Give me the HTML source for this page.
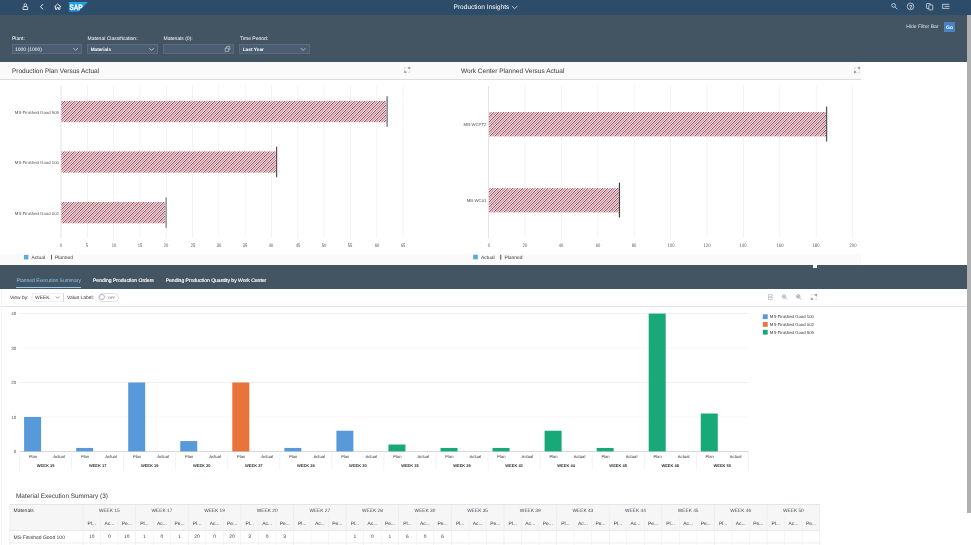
<!DOCTYPE html>
<html lang="en">
<head>
<meta charset="utf-8">
<title>Production Insights</title>
<style>
html,body{margin:0;padding:0;}
body{width:971px;height:545px;overflow:hidden;background:#fff;position:relative;font-family:"Liberation Sans",sans-serif;}
.t{position:absolute;line-height:10px;height:10px;white-space:nowrap;font-family:"Liberation Sans",sans-serif;}
.abs{position:absolute;}
.inp{position:absolute;top:44.3px;height:9.7px;box-sizing:border-box;background:#4a5d71;border:0.5px solid #586c7f;}
svg{position:absolute;left:0;top:0;overflow:visible;}
</style>
</head>
<body>
<div id="app" style="position:absolute;left:0;top:0;width:971px;height:545px;overflow:hidden;background:#fff;will-change:transform;text-rendering:geometricPrecision;">

<div class="abs" style="left:0;top:0;width:971px;height:15px;background:#2c4c69;"></div>
<div class="abs" style="left:0;top:15px;width:966.5px;height:46.5px;background:#435462;"></div>
<div class="abs" style="left:966.5px;top:15px;width:4.5px;height:498.4px;background:#b0b0b0;"></div>
<svg width="971" height="15" viewBox="0 0 971 15">
<g fill="none" stroke="#fff" stroke-width="0.8"><rect x="24.2" y="3.7" width="2.3" height="2.6" rx="0.9" stroke-width="0.7"/><path d="M23 9.5v-2.1q0-0.8 0.8-0.8h3.1q0.8 0 0.8 0.8v2.1z" stroke-width="0.75"/></g>
<path d="M43.1 4.1l-2.6 2.65 2.6 2.65" fill="none" stroke="#fff" stroke-width="0.9"/>
<g fill="none" stroke="#fff" stroke-width="0.8"><path d="M54.4 6.8l3.3-2.8 3.3 2.8"/><path d="M55.5 6.3v3.1h1.4v-1.8h1.6v1.8h1.4v-3.1"/></g>
<defs><linearGradient id="sg" x1="0" y1="0" x2="0" y2="1"><stop offset="0" stop-color="#22a6ee"/><stop offset="1" stop-color="#1a7dc6"/></linearGradient></defs><path d="M68.9 2h19l-9.8 10H68.9z" fill="url(#sg)"/>
<text x="69.4" y="10" font-family="Liberation Sans, sans-serif" font-weight="700" font-size="8" fill="#fff" stroke="#fff" stroke-width="0.25" textLength="13.2" lengthAdjust="spacingAndGlyphs">SAP</text>
<path d="M511.9 6.1l2.7 2.6 2.7-2.6" fill="none" stroke="#fff" stroke-width="0.7"/>
<g fill="none" stroke="#dde4ea" stroke-width="0.75"><circle cx="893.6" cy="5.4" r="1.9"/><path d="M895 6.9l2.4 2.4"/></g>
<g fill="none" stroke="#dde4ea" stroke-width="0.75"><circle cx="910.5" cy="6.4" r="3.3"/></g>
<text x="908.9" y="8.6" font-family="Liberation Sans, sans-serif" font-size="5.8" font-weight="700" fill="#e4eaef">?</text>
<g fill="none" stroke="#dde4ea" stroke-width="0.75"><rect x="926.5" y="3.5" width="3.8" height="5" rx="0.6"/><rect x="928.8" y="4.9" width="4" height="5" rx="0.6" fill="#2c4c69"/></g>
<g fill="none" stroke="#dde4ea" stroke-width="0.75"><path d="M942.4 4.3h7M942.4 8.4h7M942.6 4.3v4.1M944.6 6.4h4.8"/></g>
</svg>
<div class="t" style="left:385.00px;width:200px;text-align:center;top:3.1px;font-size:6.55px;color:#fff;font-weight:400;margin-left:-3.6px;">Production Insights</div>
<div class="t" style="left:12px;top:34.1px;font-size:5.0px;color:#fff;font-weight:400;">Plant:</div>
<div class="t" style="left:87.5px;top:34.1px;font-size:5.0px;color:#fff;font-weight:400;">Material Classification:</div>
<div class="t" style="left:163.5px;top:34.1px;font-size:5.0px;color:#fff;font-weight:400;">Materials (0):</div>
<div class="t" style="left:240px;top:34.1px;font-size:5.0px;color:#fff;font-weight:400;">Time Period:</div>
<div class="inp" style="left:11.5px;width:70.5px;"></div>
<div class="inp" style="left:87px;width:71px;"></div>
<div class="inp" style="left:163px;width:71px;"></div>
<div class="inp" style="left:239.3px;width:70.69999999999999px;"></div>
<div class="t" style="left:15px;top:45.1px;font-size:5.0px;color:#fff;font-weight:400;">1000 (1000)</div>
<div class="t" style="left:90.7px;top:45.1px;font-size:4.7px;color:#fff;font-weight:700;">Materials</div>
<div class="t" style="left:242.7px;top:46.1px;font-size:4.8px;color:#fff;font-weight:700;">Last Year</div>
<svg width="971" height="60" viewBox="0 0 971 60"><g fill="none" stroke="#e6ecf1" stroke-width="0.65">
<path d="M73.4 48.1l2.3 2.3 2.3-2.3"/>
<path d="M149.2 48.1l2.3 2.3 2.3-2.3"/>
<path d="M300.9 48.1l2.3 2.3 2.3-2.3"/>
<g stroke="#c9d3dc" stroke-width="0.6"><rect x="225.1" y="48.1" width="3.2" height="3.3"/><path d="M226.6 48.1v-1.7h3.2v3.3h-1.5"/></g>
</g></svg>
<div class="t" style="right:32.5px;top:22.1px;font-size:5.05px;color:#dde3e8;font-weight:400;">Hide Filter Bar</div>
<div class="abs" style="left:943.8px;top:22px;width:11.6px;height:9.8px;background:#4684c6;border-radius:0.6px;"></div>
<div class="t" style="left:849.60px;width:200px;text-align:center;top:23.1px;font-size:5.0px;color:#fff;font-weight:700;">Go</div>
<div class="abs" style="left:0;top:61.5px;width:861px;height:17.5px;background:#fafafa;"></div>
<div class="abs" style="left:0;top:79px;width:861px;height:0.7px;background:#dcdcdc;"></div>
<div class="t" style="left:12px;top:67.1px;font-size:6.5px;color:#32363a;font-weight:400;">Production Plan Versus Actual</div>
<div class="t" style="left:461px;top:67.1px;font-size:6.5px;color:#32363a;font-weight:400;">Work Center Planned Versus Actual</div>
<div class="abs" style="left:0;top:253.5px;width:861px;height:11.5px;background:#fbfafa;"></div>
<svg width="971" height="270" viewBox="0 0 971 270">
<defs><pattern id="h" width="5" height="5" patternUnits="userSpaceOnUse"><g shape-rendering="crispEdges"><rect x="0" y="0" width="1" height="1" fill="#955260"/><rect x="1" y="0" width="1" height="1" fill="#fabec5"/><rect x="2" y="0" width="1" height="1" fill="#d2b2b8"/><rect x="3" y="0" width="1" height="1" fill="#e4929d"/><rect x="4" y="0" width="1" height="1" fill="#fff4f5"/><rect x="0" y="1" width="1" height="1" fill="#fabec5"/><rect x="1" y="1" width="1" height="1" fill="#d2b2b8"/><rect x="2" y="1" width="1" height="1" fill="#e4929d"/><rect x="3" y="1" width="1" height="1" fill="#fff4f5"/><rect x="4" y="1" width="1" height="1" fill="#955260"/><rect x="0" y="2" width="1" height="1" fill="#d2b2b8"/><rect x="1" y="2" width="1" height="1" fill="#e4929d"/><rect x="2" y="2" width="1" height="1" fill="#fff4f5"/><rect x="3" y="2" width="1" height="1" fill="#955260"/><rect x="4" y="2" width="1" height="1" fill="#fabec5"/><rect x="0" y="3" width="1" height="1" fill="#e4929d"/><rect x="1" y="3" width="1" height="1" fill="#fff4f5"/><rect x="2" y="3" width="1" height="1" fill="#955260"/><rect x="3" y="3" width="1" height="1" fill="#fabec5"/><rect x="4" y="3" width="1" height="1" fill="#d2b2b8"/><rect x="0" y="4" width="1" height="1" fill="#fff4f5"/><rect x="1" y="4" width="1" height="1" fill="#955260"/><rect x="2" y="4" width="1" height="1" fill="#fabec5"/><rect x="3" y="4" width="1" height="1" fill="#d2b2b8"/><rect x="4" y="4" width="1" height="1" fill="#e4929d"/></g></pattern></defs>
<g fill="none" stroke="#5f6c79" stroke-width="0.6"><path d="M407.80 67.4h2v2M409.80 67.4l-1.7 1.7M406.60 72.60h-2v-2M404.6 72.60l1.7-1.7"/><path d="M404.6 69.20v-1.8h1.8M409.80 70.80v1.8h-1.8" stroke="#a9b2bb" stroke-dasharray="0.7 0.5"/></g>
<g fill="none" stroke="#5f6c79" stroke-width="0.6"><path d="M857.60 67.4h2v2M859.60 67.4l-1.7 1.7M856.40 72.60h-2v-2M854.4 72.60l1.7-1.7"/><path d="M854.4 69.20v-1.8h1.8M859.60 70.80v1.8h-1.8" stroke="#a9b2bb" stroke-dasharray="0.7 0.5"/></g>
<rect x="60.65" y="86" width="0.7" height="152.0" fill="#d9d9d9"/>
<rect x="86.96" y="86" width="0.7" height="152.0" fill="#efefef"/>
<rect x="113.27" y="86" width="0.7" height="152.0" fill="#efefef"/>
<rect x="139.58" y="86" width="0.7" height="152.0" fill="#efefef"/>
<rect x="165.89" y="86" width="0.7" height="152.0" fill="#efefef"/>
<rect x="192.20" y="86" width="0.7" height="152.0" fill="#efefef"/>
<rect x="218.51" y="86" width="0.7" height="152.0" fill="#efefef"/>
<rect x="244.82" y="86" width="0.7" height="152.0" fill="#efefef"/>
<rect x="271.13" y="86" width="0.7" height="152.0" fill="#efefef"/>
<rect x="297.44" y="86" width="0.7" height="152.0" fill="#efefef"/>
<rect x="323.75" y="86" width="0.7" height="152.0" fill="#efefef"/>
<rect x="350.06" y="86" width="0.7" height="152.0" fill="#efefef"/>
<rect x="376.37" y="86" width="0.7" height="152.0" fill="#efefef"/>
<rect x="402.68" y="86" width="0.7" height="152.0" fill="#efefef"/>
<rect x="61.3" y="100.9" width="325.04" height="21.3" fill="url(#h)"/>
<rect x="386.29" y="96.20" width="1.7" height="30.5" fill="#8d9391"/>
<rect x="61.3" y="151.4" width="214.54" height="21.3" fill="url(#h)"/>
<rect x="276.09" y="146.70" width="1.1" height="30.5" fill="#46464c"/>
<rect x="61.3" y="202.0" width="104.04" height="21.3" fill="url(#h)"/>
<rect x="165.34" y="197.30" width="1.6" height="30.5" fill="#979a9a"/>
<rect x="488.25" y="86" width="0.7" height="152" fill="#d9d9d9"/>
<rect x="524.65" y="86" width="0.7" height="152" fill="#efefef"/>
<rect x="561.05" y="86" width="0.7" height="152" fill="#efefef"/>
<rect x="597.45" y="86" width="0.7" height="152" fill="#efefef"/>
<rect x="633.85" y="86" width="0.7" height="152" fill="#efefef"/>
<rect x="670.25" y="86" width="0.7" height="152" fill="#efefef"/>
<rect x="706.65" y="86" width="0.7" height="152" fill="#efefef"/>
<rect x="743.05" y="86" width="0.7" height="152" fill="#efefef"/>
<rect x="779.45" y="86" width="0.7" height="152" fill="#efefef"/>
<rect x="815.85" y="86" width="0.7" height="152" fill="#efefef"/>
<rect x="852.25" y="86" width="0.7" height="152" fill="#efefef"/>
<rect x="488.90000000000003" y="112.1" width="337.07" height="24.3" fill="url(#h)"/>
<rect x="825.92" y="106.60" width="1.3" height="34.9" fill="#58585e"/>
<rect x="488.90000000000003" y="188.1" width="129.96" height="24.3" fill="url(#h)"/>
<rect x="618.86" y="182.60" width="1.2" height="34.9" fill="#3e3e44"/>
<rect x="23.9" y="254.9" width="4.5" height="4.5" fill="#5caed4"/><rect x="51" y="254.9" width="0.8" height="4.7" fill="#33373b"/>
<rect x="473.1" y="254.7" width="4.7" height="4.6" fill="#5caed4"/><rect x="500" y="254.8" width="1.3" height="4.8" fill="#6e7276"/>
</svg>
<div class="t" style="right:912px;top:108.1px;font-size:4.3px;color:#505458;font-weight:400;">MS-Finished Good 909</div>
<div class="t" style="right:912px;top:158.1px;font-size:4.3px;color:#505458;font-weight:400;">MS-Finished Good 100</div>
<div class="t" style="right:912px;top:209.1px;font-size:4.3px;color:#505458;font-weight:400;">MS-Finished Good 002</div>
<div class="t" style="right:484.5px;top:120.1px;font-size:4.3px;color:#505458;font-weight:400;">MB-WCPT2</div>
<div class="t" style="right:484.5px;top:196.1px;font-size:4.3px;color:#505458;font-weight:400;">MB-WC01</div>
<div class="t" style="left:-39.00px;width:200px;text-align:center;top:241.1px;font-size:5.0px;color:#505458;font-weight:400;transform:scaleX(0.82);">0</div>
<div class="t" style="left:-12.69px;width:200px;text-align:center;top:241.1px;font-size:5.0px;color:#505458;font-weight:400;transform:scaleX(0.82);">5</div>
<div class="t" style="left:13.62px;width:200px;text-align:center;top:241.1px;font-size:5.0px;color:#505458;font-weight:400;transform:scaleX(0.82);">10</div>
<div class="t" style="left:39.93px;width:200px;text-align:center;top:241.1px;font-size:5.0px;color:#505458;font-weight:400;transform:scaleX(0.82);">15</div>
<div class="t" style="left:66.24px;width:200px;text-align:center;top:241.1px;font-size:5.0px;color:#505458;font-weight:400;transform:scaleX(0.82);">20</div>
<div class="t" style="left:92.55px;width:200px;text-align:center;top:241.1px;font-size:5.0px;color:#505458;font-weight:400;transform:scaleX(0.82);">25</div>
<div class="t" style="left:118.86px;width:200px;text-align:center;top:241.1px;font-size:5.0px;color:#505458;font-weight:400;transform:scaleX(0.82);">30</div>
<div class="t" style="left:145.17px;width:200px;text-align:center;top:241.1px;font-size:5.0px;color:#505458;font-weight:400;transform:scaleX(0.82);">35</div>
<div class="t" style="left:171.48px;width:200px;text-align:center;top:241.1px;font-size:5.0px;color:#505458;font-weight:400;transform:scaleX(0.82);">40</div>
<div class="t" style="left:197.79px;width:200px;text-align:center;top:241.1px;font-size:5.0px;color:#505458;font-weight:400;transform:scaleX(0.82);">45</div>
<div class="t" style="left:224.10px;width:200px;text-align:center;top:241.1px;font-size:5.0px;color:#505458;font-weight:400;transform:scaleX(0.82);">50</div>
<div class="t" style="left:250.41px;width:200px;text-align:center;top:241.1px;font-size:5.0px;color:#505458;font-weight:400;transform:scaleX(0.82);">55</div>
<div class="t" style="left:276.72px;width:200px;text-align:center;top:241.1px;font-size:5.0px;color:#505458;font-weight:400;transform:scaleX(0.82);">60</div>
<div class="t" style="left:303.03px;width:200px;text-align:center;top:241.1px;font-size:5.0px;color:#505458;font-weight:400;transform:scaleX(0.82);">65</div>
<div class="t" style="left:388.60px;width:200px;text-align:center;top:241.1px;font-size:5.0px;color:#505458;font-weight:400;transform:scaleX(0.82);">0</div>
<div class="t" style="left:425.00px;width:200px;text-align:center;top:241.1px;font-size:5.0px;color:#505458;font-weight:400;transform:scaleX(0.82);">20</div>
<div class="t" style="left:461.40px;width:200px;text-align:center;top:241.1px;font-size:5.0px;color:#505458;font-weight:400;transform:scaleX(0.82);">40</div>
<div class="t" style="left:497.80px;width:200px;text-align:center;top:241.1px;font-size:5.0px;color:#505458;font-weight:400;transform:scaleX(0.82);">60</div>
<div class="t" style="left:534.20px;width:200px;text-align:center;top:241.1px;font-size:5.0px;color:#505458;font-weight:400;transform:scaleX(0.82);">80</div>
<div class="t" style="left:570.60px;width:200px;text-align:center;top:241.1px;font-size:5.0px;color:#505458;font-weight:400;transform:scaleX(0.82);">100</div>
<div class="t" style="left:607.00px;width:200px;text-align:center;top:241.1px;font-size:5.0px;color:#505458;font-weight:400;transform:scaleX(0.82);">120</div>
<div class="t" style="left:643.40px;width:200px;text-align:center;top:241.1px;font-size:5.0px;color:#505458;font-weight:400;transform:scaleX(0.82);">140</div>
<div class="t" style="left:679.80px;width:200px;text-align:center;top:241.1px;font-size:5.0px;color:#505458;font-weight:400;transform:scaleX(0.82);">160</div>
<div class="t" style="left:716.20px;width:200px;text-align:center;top:241.1px;font-size:5.0px;color:#505458;font-weight:400;transform:scaleX(0.82);">180</div>
<div class="t" style="left:752.60px;width:200px;text-align:center;top:241.1px;font-size:5.0px;color:#505458;font-weight:400;transform:scaleX(0.82);">200</div>
<div class="t" style="left:31.5px;top:254.1px;font-size:4.9px;color:#32363a;font-weight:400;">Actual</div>
<div class="t" style="left:55px;top:254.1px;font-size:4.9px;color:#32363a;font-weight:400;">Planned</div>
<div class="t" style="left:481px;top:254.1px;font-size:4.9px;color:#32363a;font-weight:400;">Actual</div>
<div class="t" style="left:504.5px;top:254.1px;font-size:4.9px;color:#32363a;font-weight:400;">Planned</div>
<div class="abs" style="left:0;top:265px;width:966.5px;height:23.6px;background:#435462;"></div>
<div class="abs" style="left:813px;top:264.6px;width:4px;height:3.3px;background:#fff;"></div>
<div class="t" style="left:16.5px;top:276.1px;font-size:5.0px;color:#8fc7f5;font-weight:400;">Planned Execution Summary</div>
<div class="abs" style="left:16px;top:286.7px;width:65px;height:1px;background:#8fc7f5;"></div>
<div class="t" style="left:93px;top:276.1px;font-size:5.05px;color:#fff;font-weight:400;-webkit-text-stroke:0.15px #fff;">Pending Production Orders</div>
<div class="t" style="left:165.7px;top:276.1px;font-size:5.05px;color:#fff;font-weight:400;-webkit-text-stroke:0.15px #fff;">Pending Production Quantity by Work Center</div>
<div class="t" style="left:10px;top:294.1px;font-size:4.92px;color:#32363a;font-weight:400;">View by:</div>
<div class="abs" style="left:31.5px;top:292.6px;width:32px;height:9.2px;box-sizing:border-box;border:0.6px solid #eeeff0;border-right-color:#d3d6d9;background:#fff;"></div>
<div class="t" style="left:35px;top:294.1px;font-size:4.92px;color:#32363a;font-weight:400;">WEEK</div>
<div class="t" style="left:67px;top:294.1px;font-size:4.92px;color:#32363a;font-weight:400;">Value Label:</div>
<div class="abs" style="left:97.5px;top:292.6px;width:21.5px;height:9.2px;box-sizing:border-box;border:0.6px solid #dcdfe2;border-radius:4.6px;background:#fff;"></div>
<div class="abs" style="left:99px;top:294.1px;width:6.2px;height:6.2px;box-sizing:border-box;border:0.6px solid #b0b6bc;border-radius:50%;background:#fff;"></div>
<div class="t" style="left:108.3px;top:293.1px;font-size:3.6px;color:#5a6066;font-weight:400;">OFF</div>
<div class="abs" style="left:0;top:306.2px;width:966.5px;height:0.7px;background:#e4e4e4;"></div>
<div class="abs" style="left:1px;top:289px;width:0.6px;height:256px;background:#f6f6f6;"></div>
<svg width="971" height="545" viewBox="0 0 971 545">
<path d="M55.6 296.4l1.9 1.9 1.9-1.9" fill="none" stroke="#5b6a78" stroke-width="0.6"/>
<g fill="none" stroke="#71859a" stroke-width="0.6">
<rect x="768.5" y="294.5" width="3.6" height="5" stroke-dasharray="1.2 0.7"/><path d="M768.5 297h3.6"/>
<circle cx="784" cy="296.4" r="1.8"/><path d="M785.3 297.8l1.8 1.8M783 296.4h2"/>
<circle cx="798.2" cy="296.4" r="1.8"/><path d="M799.5 297.8l1.8 1.8M797.2 296.4h2M798.2 295.4v2"/>
</g>
<g fill="none" stroke="#5f6c79" stroke-width="0.6"><path d="M814.50 294.4h2v2M816.50 294.4l-1.7 1.7M813.30 299.60h-2v-2M811.3 299.60l1.7-1.7"/><path d="M811.3 296.20v-1.8h1.8M816.50 297.80v1.8h-1.8" stroke="#a9b2bb" stroke-dasharray="0.7 0.5"/></g>
<rect x="19.6" y="416.60" width="728.6999999999999" height="0.7" fill="#f4f4f4"/>
<rect x="19.6" y="382.15" width="728.6999999999999" height="0.7" fill="#e9e9e9"/>
<rect x="19.6" y="347.70" width="728.6999999999999" height="0.7" fill="#f4f4f4"/>
<rect x="19.6" y="313.25" width="728.6999999999999" height="0.7" fill="#e9e9e9"/>
<rect x="19.6" y="451.10" width="728.6999999999999" height="0.7" fill="#c9c9c9"/>
<rect x="24.10" y="416.95" width="17" height="34.45" fill="#5899da"/>
<rect x="76.15" y="447.95" width="17" height="3.44" fill="#5899da"/>
<rect x="128.20" y="382.50" width="17" height="68.90" fill="#5899da"/>
<rect x="180.25" y="441.06" width="17" height="10.33" fill="#5899da"/>
<rect x="232.30" y="382.50" width="17" height="68.90" fill="#e8743b"/>
<rect x="284.35" y="447.95" width="17" height="3.44" fill="#5899da"/>
<rect x="336.40" y="430.73" width="17" height="20.67" fill="#5899da"/>
<rect x="388.45" y="444.51" width="17" height="6.89" fill="#19a979"/>
<rect x="440.50" y="447.95" width="17" height="3.44" fill="#19a979"/>
<rect x="492.55" y="447.95" width="17" height="3.44" fill="#19a979"/>
<rect x="544.60" y="430.73" width="17" height="20.67" fill="#19a979"/>
<rect x="596.65" y="447.95" width="17" height="3.44" fill="#19a979"/>
<rect x="648.70" y="313.60" width="17" height="137.80" fill="#19a979"/>
<rect x="700.75" y="413.50" width="17" height="37.89" fill="#19a979"/>
<rect x="19.30" y="451.4" width="0.6" height="19" fill="#ececec"/>
<rect x="71.35" y="451.4" width="0.6" height="19" fill="#ececec"/>
<rect x="123.40" y="451.4" width="0.6" height="19" fill="#ececec"/>
<rect x="175.45" y="451.4" width="0.6" height="19" fill="#ececec"/>
<rect x="227.50" y="451.4" width="0.6" height="19" fill="#ececec"/>
<rect x="279.55" y="451.4" width="0.6" height="19" fill="#ececec"/>
<rect x="331.60" y="451.4" width="0.6" height="19" fill="#ececec"/>
<rect x="383.65" y="451.4" width="0.6" height="19" fill="#ececec"/>
<rect x="435.70" y="451.4" width="0.6" height="19" fill="#ececec"/>
<rect x="487.75" y="451.4" width="0.6" height="19" fill="#ececec"/>
<rect x="539.80" y="451.4" width="0.6" height="19" fill="#ececec"/>
<rect x="591.85" y="451.4" width="0.6" height="19" fill="#ececec"/>
<rect x="643.90" y="451.4" width="0.6" height="19" fill="#ececec"/>
<rect x="695.95" y="451.4" width="0.6" height="19" fill="#ececec"/>
<rect x="748.00" y="451.4" width="0.6" height="19" fill="#ececec"/>
<rect x="762.8" y="314.30" width="4.9" height="4.8" fill="#5899da"/>
<rect x="762.8" y="322.05" width="4.9" height="4.8" fill="#e8743b"/>
<rect x="762.8" y="329.80" width="4.9" height="4.8" fill="#19a979"/>
</svg>
<div class="t" style="right:954.8px;top:447.1px;font-size:4.5px;color:#505458;font-weight:400;">0</div>
<div class="t" style="right:954.8px;top:413.1px;font-size:4.5px;color:#505458;font-weight:400;">10</div>
<div class="t" style="right:954.8px;top:378.1px;font-size:4.5px;color:#505458;font-weight:400;">20</div>
<div class="t" style="right:954.8px;top:344.1px;font-size:4.5px;color:#505458;font-weight:400;">30</div>
<div class="t" style="right:954.8px;top:309.1px;font-size:4.5px;color:#505458;font-weight:400;">40</div>
<div class="t" style="left:-67.00px;width:200px;text-align:center;top:452.1px;font-size:4.1px;color:#32363a;font-weight:400;">Plan</div>
<div class="t" style="left:-41.00px;width:200px;text-align:center;top:452.1px;font-size:4.2px;color:#32363a;font-weight:400;">Actual</div>
<div class="t" style="left:-54.40px;width:200px;text-align:center;top:461.1px;font-size:4.0px;color:#2a2e32;font-weight:700;">WEEK 15</div>
<div class="t" style="left:-14.95px;width:200px;text-align:center;top:452.1px;font-size:4.1px;color:#32363a;font-weight:400;">Plan</div>
<div class="t" style="left:11.05px;width:200px;text-align:center;top:452.1px;font-size:4.2px;color:#32363a;font-weight:400;">Actual</div>
<div class="t" style="left:-2.35px;width:200px;text-align:center;top:461.1px;font-size:4.0px;color:#2a2e32;font-weight:700;">WEEK 17</div>
<div class="t" style="left:37.10px;width:200px;text-align:center;top:452.1px;font-size:4.1px;color:#32363a;font-weight:400;">Plan</div>
<div class="t" style="left:63.10px;width:200px;text-align:center;top:452.1px;font-size:4.2px;color:#32363a;font-weight:400;">Actual</div>
<div class="t" style="left:49.70px;width:200px;text-align:center;top:461.1px;font-size:4.0px;color:#2a2e32;font-weight:700;">WEEK 19</div>
<div class="t" style="left:89.15px;width:200px;text-align:center;top:452.1px;font-size:4.1px;color:#32363a;font-weight:400;">Plan</div>
<div class="t" style="left:115.15px;width:200px;text-align:center;top:452.1px;font-size:4.2px;color:#32363a;font-weight:400;">Actual</div>
<div class="t" style="left:101.75px;width:200px;text-align:center;top:461.1px;font-size:4.0px;color:#2a2e32;font-weight:700;">WEEK 20</div>
<div class="t" style="left:141.20px;width:200px;text-align:center;top:452.1px;font-size:4.1px;color:#32363a;font-weight:400;">Plan</div>
<div class="t" style="left:167.20px;width:200px;text-align:center;top:452.1px;font-size:4.2px;color:#32363a;font-weight:400;">Actual</div>
<div class="t" style="left:153.80px;width:200px;text-align:center;top:461.1px;font-size:4.0px;color:#2a2e32;font-weight:700;">WEEK 27</div>
<div class="t" style="left:193.25px;width:200px;text-align:center;top:452.1px;font-size:4.1px;color:#32363a;font-weight:400;">Plan</div>
<div class="t" style="left:219.25px;width:200px;text-align:center;top:452.1px;font-size:4.2px;color:#32363a;font-weight:400;">Actual</div>
<div class="t" style="left:205.85px;width:200px;text-align:center;top:461.1px;font-size:4.0px;color:#2a2e32;font-weight:700;">WEEK 28</div>
<div class="t" style="left:245.30px;width:200px;text-align:center;top:452.1px;font-size:4.1px;color:#32363a;font-weight:400;">Plan</div>
<div class="t" style="left:271.30px;width:200px;text-align:center;top:452.1px;font-size:4.2px;color:#32363a;font-weight:400;">Actual</div>
<div class="t" style="left:257.90px;width:200px;text-align:center;top:461.1px;font-size:4.0px;color:#2a2e32;font-weight:700;">WEEK 30</div>
<div class="t" style="left:297.35px;width:200px;text-align:center;top:452.1px;font-size:4.1px;color:#32363a;font-weight:400;">Plan</div>
<div class="t" style="left:323.35px;width:200px;text-align:center;top:452.1px;font-size:4.2px;color:#32363a;font-weight:400;">Actual</div>
<div class="t" style="left:309.95px;width:200px;text-align:center;top:461.1px;font-size:4.0px;color:#2a2e32;font-weight:700;">WEEK 35</div>
<div class="t" style="left:349.40px;width:200px;text-align:center;top:452.1px;font-size:4.1px;color:#32363a;font-weight:400;">Plan</div>
<div class="t" style="left:375.40px;width:200px;text-align:center;top:452.1px;font-size:4.2px;color:#32363a;font-weight:400;">Actual</div>
<div class="t" style="left:362.00px;width:200px;text-align:center;top:461.1px;font-size:4.0px;color:#2a2e32;font-weight:700;">WEEK 39</div>
<div class="t" style="left:401.45px;width:200px;text-align:center;top:452.1px;font-size:4.1px;color:#32363a;font-weight:400;">Plan</div>
<div class="t" style="left:427.45px;width:200px;text-align:center;top:452.1px;font-size:4.2px;color:#32363a;font-weight:400;">Actual</div>
<div class="t" style="left:414.05px;width:200px;text-align:center;top:461.1px;font-size:4.0px;color:#2a2e32;font-weight:700;">WEEK 43</div>
<div class="t" style="left:453.50px;width:200px;text-align:center;top:452.1px;font-size:4.1px;color:#32363a;font-weight:400;">Plan</div>
<div class="t" style="left:479.50px;width:200px;text-align:center;top:452.1px;font-size:4.2px;color:#32363a;font-weight:400;">Actual</div>
<div class="t" style="left:466.10px;width:200px;text-align:center;top:461.1px;font-size:4.0px;color:#2a2e32;font-weight:700;">WEEK 44</div>
<div class="t" style="left:505.55px;width:200px;text-align:center;top:452.1px;font-size:4.1px;color:#32363a;font-weight:400;">Plan</div>
<div class="t" style="left:531.55px;width:200px;text-align:center;top:452.1px;font-size:4.2px;color:#32363a;font-weight:400;">Actual</div>
<div class="t" style="left:518.15px;width:200px;text-align:center;top:461.1px;font-size:4.0px;color:#2a2e32;font-weight:700;">WEEK 45</div>
<div class="t" style="left:557.60px;width:200px;text-align:center;top:452.1px;font-size:4.1px;color:#32363a;font-weight:400;">Plan</div>
<div class="t" style="left:583.60px;width:200px;text-align:center;top:452.1px;font-size:4.2px;color:#32363a;font-weight:400;">Actual</div>
<div class="t" style="left:570.20px;width:200px;text-align:center;top:461.1px;font-size:4.0px;color:#2a2e32;font-weight:700;">WEEK 46</div>
<div class="t" style="left:609.65px;width:200px;text-align:center;top:452.1px;font-size:4.1px;color:#32363a;font-weight:400;">Plan</div>
<div class="t" style="left:635.65px;width:200px;text-align:center;top:452.1px;font-size:4.2px;color:#32363a;font-weight:400;">Actual</div>
<div class="t" style="left:622.25px;width:200px;text-align:center;top:461.1px;font-size:4.0px;color:#2a2e32;font-weight:700;">WEEK 50</div>
<div class="t" style="left:769.8px;top:312.1px;font-size:4.3px;color:#32363a;font-weight:400;">MS-Finished Good 100</div>
<div class="t" style="left:769.8px;top:320.1px;font-size:4.3px;color:#32363a;font-weight:400;">MS-Finished Good 002</div>
<div class="t" style="left:769.8px;top:328.1px;font-size:4.3px;color:#32363a;font-weight:400;">MS-Finished Good 909</div>
<div class="t" style="left:16px;top:492.1px;font-size:6.45px;color:#32363a;font-weight:400;">Material Execution Summary (3)</div>
<div class="abs" style="left:9.9px;top:504.3px;width:809.8px;height:26.3px;background:#f6f6f6;"></div>
<svg width="971" height="545" viewBox="0 0 971 545">
<rect x="9.9" y="504" width="809.8" height="0.7" fill="#dedede"/>
<rect x="9.9" y="530.3" width="809.8" height="0.7" fill="#e3e3e3"/>
<rect x="9.9" y="542.6" width="809.8" height="0.7" fill="#e5e5e5"/>
<rect x="9.6" y="504" width="0.6" height="41" fill="#e5e5e5"/>
<rect x="82.70" y="504" width="0.6" height="41" fill="#e9e9e9"/>
<rect x="100.24" y="517" width="0.6" height="28" fill="#eeeeee"/>
<rect x="117.78" y="517" width="0.6" height="28" fill="#eeeeee"/>
<rect x="135.32" y="504" width="0.6" height="41" fill="#e9e9e9"/>
<rect x="152.86" y="517" width="0.6" height="28" fill="#eeeeee"/>
<rect x="170.40" y="517" width="0.6" height="28" fill="#eeeeee"/>
<rect x="187.94" y="504" width="0.6" height="41" fill="#e9e9e9"/>
<rect x="205.48" y="517" width="0.6" height="28" fill="#eeeeee"/>
<rect x="223.02" y="517" width="0.6" height="28" fill="#eeeeee"/>
<rect x="240.56" y="504" width="0.6" height="41" fill="#e9e9e9"/>
<rect x="258.10" y="517" width="0.6" height="28" fill="#eeeeee"/>
<rect x="275.64" y="517" width="0.6" height="28" fill="#eeeeee"/>
<rect x="293.18" y="504" width="0.6" height="41" fill="#e9e9e9"/>
<rect x="310.72" y="517" width="0.6" height="28" fill="#eeeeee"/>
<rect x="328.26" y="517" width="0.6" height="28" fill="#eeeeee"/>
<rect x="345.80" y="504" width="0.6" height="41" fill="#e9e9e9"/>
<rect x="363.34" y="517" width="0.6" height="28" fill="#eeeeee"/>
<rect x="380.88" y="517" width="0.6" height="28" fill="#eeeeee"/>
<rect x="398.42" y="504" width="0.6" height="41" fill="#e9e9e9"/>
<rect x="415.96" y="517" width="0.6" height="28" fill="#eeeeee"/>
<rect x="433.50" y="517" width="0.6" height="28" fill="#eeeeee"/>
<rect x="451.04" y="504" width="0.6" height="41" fill="#e9e9e9"/>
<rect x="468.58" y="517" width="0.6" height="28" fill="#eeeeee"/>
<rect x="486.12" y="517" width="0.6" height="28" fill="#eeeeee"/>
<rect x="503.66" y="504" width="0.6" height="41" fill="#e9e9e9"/>
<rect x="521.20" y="517" width="0.6" height="28" fill="#eeeeee"/>
<rect x="538.74" y="517" width="0.6" height="28" fill="#eeeeee"/>
<rect x="556.28" y="504" width="0.6" height="41" fill="#e9e9e9"/>
<rect x="573.82" y="517" width="0.6" height="28" fill="#eeeeee"/>
<rect x="591.36" y="517" width="0.6" height="28" fill="#eeeeee"/>
<rect x="608.90" y="504" width="0.6" height="41" fill="#e9e9e9"/>
<rect x="626.44" y="517" width="0.6" height="28" fill="#eeeeee"/>
<rect x="643.98" y="517" width="0.6" height="28" fill="#eeeeee"/>
<rect x="661.52" y="504" width="0.6" height="41" fill="#e9e9e9"/>
<rect x="679.06" y="517" width="0.6" height="28" fill="#eeeeee"/>
<rect x="696.60" y="517" width="0.6" height="28" fill="#eeeeee"/>
<rect x="714.14" y="504" width="0.6" height="41" fill="#e9e9e9"/>
<rect x="731.68" y="517" width="0.6" height="28" fill="#eeeeee"/>
<rect x="749.22" y="517" width="0.6" height="28" fill="#eeeeee"/>
<rect x="766.76" y="504" width="0.6" height="41" fill="#e9e9e9"/>
<rect x="784.30" y="517" width="0.6" height="28" fill="#eeeeee"/>
<rect x="801.84" y="517" width="0.6" height="28" fill="#eeeeee"/>
<rect x="819.38" y="504" width="0.6" height="41" fill="#e9e9e9"/>
</svg>
<div class="t" style="left:13.5px;top:506.1px;font-size:5.0px;color:#32363a;font-weight:400;">Materials</div>
<div class="t" style="left:13.5px;top:533.1px;font-size:5.0px;color:#32363a;font-weight:400;">MS-Finished Good 100</div>
<div class="t" style="left:9.31px;width:200px;text-align:center;top:507.1px;font-size:4.8px;color:#4a4f54;font-weight:400;">WEEK 15</div>
<div class="t" style="left:-8.23px;width:200px;text-align:center;top:520.1px;font-size:4.9px;color:#32363a;font-weight:400;">Pl...</div>
<div class="t" style="left:9.31px;width:200px;text-align:center;top:520.1px;font-size:4.9px;color:#32363a;font-weight:400;">Ac...</div>
<div class="t" style="left:26.85px;width:200px;text-align:center;top:520.1px;font-size:4.9px;color:#32363a;font-weight:400;">Pe...</div>
<div class="t" style="left:-8.23px;width:200px;text-align:center;top:533.1px;font-size:4.9px;color:#32363a;font-weight:400;">10</div>
<div class="t" style="left:9.31px;width:200px;text-align:center;top:533.1px;font-size:4.9px;color:#32363a;font-weight:400;">0</div>
<div class="t" style="left:26.85px;width:200px;text-align:center;top:533.1px;font-size:4.9px;color:#32363a;font-weight:400;">10</div>
<div class="t" style="left:61.93px;width:200px;text-align:center;top:507.1px;font-size:4.8px;color:#4a4f54;font-weight:400;">WEEK 17</div>
<div class="t" style="left:44.39px;width:200px;text-align:center;top:520.1px;font-size:4.9px;color:#32363a;font-weight:400;">Pl...</div>
<div class="t" style="left:61.93px;width:200px;text-align:center;top:520.1px;font-size:4.9px;color:#32363a;font-weight:400;">Ac...</div>
<div class="t" style="left:79.47px;width:200px;text-align:center;top:520.1px;font-size:4.9px;color:#32363a;font-weight:400;">Pe...</div>
<div class="t" style="left:44.39px;width:200px;text-align:center;top:533.1px;font-size:4.9px;color:#32363a;font-weight:400;">1</div>
<div class="t" style="left:61.93px;width:200px;text-align:center;top:533.1px;font-size:4.9px;color:#32363a;font-weight:400;">0</div>
<div class="t" style="left:79.47px;width:200px;text-align:center;top:533.1px;font-size:4.9px;color:#32363a;font-weight:400;">1</div>
<div class="t" style="left:114.55px;width:200px;text-align:center;top:507.1px;font-size:4.8px;color:#4a4f54;font-weight:400;">WEEK 19</div>
<div class="t" style="left:97.01px;width:200px;text-align:center;top:520.1px;font-size:4.9px;color:#32363a;font-weight:400;">Pl...</div>
<div class="t" style="left:114.55px;width:200px;text-align:center;top:520.1px;font-size:4.9px;color:#32363a;font-weight:400;">Ac...</div>
<div class="t" style="left:132.09px;width:200px;text-align:center;top:520.1px;font-size:4.9px;color:#32363a;font-weight:400;">Pe...</div>
<div class="t" style="left:97.01px;width:200px;text-align:center;top:533.1px;font-size:4.9px;color:#32363a;font-weight:400;">20</div>
<div class="t" style="left:114.55px;width:200px;text-align:center;top:533.1px;font-size:4.9px;color:#32363a;font-weight:400;">0</div>
<div class="t" style="left:132.09px;width:200px;text-align:center;top:533.1px;font-size:4.9px;color:#32363a;font-weight:400;">20</div>
<div class="t" style="left:167.17px;width:200px;text-align:center;top:507.1px;font-size:4.8px;color:#4a4f54;font-weight:400;">WEEK 20</div>
<div class="t" style="left:149.63px;width:200px;text-align:center;top:520.1px;font-size:4.9px;color:#32363a;font-weight:400;">Pl...</div>
<div class="t" style="left:167.17px;width:200px;text-align:center;top:520.1px;font-size:4.9px;color:#32363a;font-weight:400;">Ac...</div>
<div class="t" style="left:184.71px;width:200px;text-align:center;top:520.1px;font-size:4.9px;color:#32363a;font-weight:400;">Pe...</div>
<div class="t" style="left:149.63px;width:200px;text-align:center;top:533.1px;font-size:4.9px;color:#32363a;font-weight:400;">3</div>
<div class="t" style="left:167.17px;width:200px;text-align:center;top:533.1px;font-size:4.9px;color:#32363a;font-weight:400;">0</div>
<div class="t" style="left:184.71px;width:200px;text-align:center;top:533.1px;font-size:4.9px;color:#32363a;font-weight:400;">3</div>
<div class="t" style="left:219.79px;width:200px;text-align:center;top:507.1px;font-size:4.8px;color:#4a4f54;font-weight:400;">WEEK 27</div>
<div class="t" style="left:202.25px;width:200px;text-align:center;top:520.1px;font-size:4.9px;color:#32363a;font-weight:400;">Pl...</div>
<div class="t" style="left:219.79px;width:200px;text-align:center;top:520.1px;font-size:4.9px;color:#32363a;font-weight:400;">Ac...</div>
<div class="t" style="left:237.33px;width:200px;text-align:center;top:520.1px;font-size:4.9px;color:#32363a;font-weight:400;">Pe...</div>
<div class="t" style="left:272.41px;width:200px;text-align:center;top:507.1px;font-size:4.8px;color:#4a4f54;font-weight:400;">WEEK 28</div>
<div class="t" style="left:254.87px;width:200px;text-align:center;top:520.1px;font-size:4.9px;color:#32363a;font-weight:400;">Pl...</div>
<div class="t" style="left:272.41px;width:200px;text-align:center;top:520.1px;font-size:4.9px;color:#32363a;font-weight:400;">Ac...</div>
<div class="t" style="left:289.95px;width:200px;text-align:center;top:520.1px;font-size:4.9px;color:#32363a;font-weight:400;">Pe...</div>
<div class="t" style="left:254.87px;width:200px;text-align:center;top:533.1px;font-size:4.9px;color:#32363a;font-weight:400;">1</div>
<div class="t" style="left:272.41px;width:200px;text-align:center;top:533.1px;font-size:4.9px;color:#32363a;font-weight:400;">0</div>
<div class="t" style="left:289.95px;width:200px;text-align:center;top:533.1px;font-size:4.9px;color:#32363a;font-weight:400;">1</div>
<div class="t" style="left:325.03px;width:200px;text-align:center;top:507.1px;font-size:4.8px;color:#4a4f54;font-weight:400;">WEEK 30</div>
<div class="t" style="left:307.49px;width:200px;text-align:center;top:520.1px;font-size:4.9px;color:#32363a;font-weight:400;">Pl...</div>
<div class="t" style="left:325.03px;width:200px;text-align:center;top:520.1px;font-size:4.9px;color:#32363a;font-weight:400;">Ac...</div>
<div class="t" style="left:342.57px;width:200px;text-align:center;top:520.1px;font-size:4.9px;color:#32363a;font-weight:400;">Pe...</div>
<div class="t" style="left:307.49px;width:200px;text-align:center;top:533.1px;font-size:4.9px;color:#32363a;font-weight:400;">6</div>
<div class="t" style="left:325.03px;width:200px;text-align:center;top:533.1px;font-size:4.9px;color:#32363a;font-weight:400;">0</div>
<div class="t" style="left:342.57px;width:200px;text-align:center;top:533.1px;font-size:4.9px;color:#32363a;font-weight:400;">6</div>
<div class="t" style="left:377.65px;width:200px;text-align:center;top:507.1px;font-size:4.8px;color:#4a4f54;font-weight:400;">WEEK 35</div>
<div class="t" style="left:360.11px;width:200px;text-align:center;top:520.1px;font-size:4.9px;color:#32363a;font-weight:400;">Pl...</div>
<div class="t" style="left:377.65px;width:200px;text-align:center;top:520.1px;font-size:4.9px;color:#32363a;font-weight:400;">Ac...</div>
<div class="t" style="left:395.19px;width:200px;text-align:center;top:520.1px;font-size:4.9px;color:#32363a;font-weight:400;">Pe...</div>
<div class="t" style="left:430.27px;width:200px;text-align:center;top:507.1px;font-size:4.8px;color:#4a4f54;font-weight:400;">WEEK 39</div>
<div class="t" style="left:412.73px;width:200px;text-align:center;top:520.1px;font-size:4.9px;color:#32363a;font-weight:400;">Pl...</div>
<div class="t" style="left:430.27px;width:200px;text-align:center;top:520.1px;font-size:4.9px;color:#32363a;font-weight:400;">Ac...</div>
<div class="t" style="left:447.81px;width:200px;text-align:center;top:520.1px;font-size:4.9px;color:#32363a;font-weight:400;">Pe...</div>
<div class="t" style="left:482.89px;width:200px;text-align:center;top:507.1px;font-size:4.8px;color:#4a4f54;font-weight:400;">WEEK 43</div>
<div class="t" style="left:465.35px;width:200px;text-align:center;top:520.1px;font-size:4.9px;color:#32363a;font-weight:400;">Pl...</div>
<div class="t" style="left:482.89px;width:200px;text-align:center;top:520.1px;font-size:4.9px;color:#32363a;font-weight:400;">Ac...</div>
<div class="t" style="left:500.43px;width:200px;text-align:center;top:520.1px;font-size:4.9px;color:#32363a;font-weight:400;">Pe...</div>
<div class="t" style="left:535.51px;width:200px;text-align:center;top:507.1px;font-size:4.8px;color:#4a4f54;font-weight:400;">WEEK 44</div>
<div class="t" style="left:517.97px;width:200px;text-align:center;top:520.1px;font-size:4.9px;color:#32363a;font-weight:400;">Pl...</div>
<div class="t" style="left:535.51px;width:200px;text-align:center;top:520.1px;font-size:4.9px;color:#32363a;font-weight:400;">Ac...</div>
<div class="t" style="left:553.05px;width:200px;text-align:center;top:520.1px;font-size:4.9px;color:#32363a;font-weight:400;">Pe...</div>
<div class="t" style="left:588.13px;width:200px;text-align:center;top:507.1px;font-size:4.8px;color:#4a4f54;font-weight:400;">WEEK 45</div>
<div class="t" style="left:570.59px;width:200px;text-align:center;top:520.1px;font-size:4.9px;color:#32363a;font-weight:400;">Pl...</div>
<div class="t" style="left:588.13px;width:200px;text-align:center;top:520.1px;font-size:4.9px;color:#32363a;font-weight:400;">Ac...</div>
<div class="t" style="left:605.67px;width:200px;text-align:center;top:520.1px;font-size:4.9px;color:#32363a;font-weight:400;">Pe...</div>
<div class="t" style="left:640.75px;width:200px;text-align:center;top:507.1px;font-size:4.8px;color:#4a4f54;font-weight:400;">WEEK 46</div>
<div class="t" style="left:623.21px;width:200px;text-align:center;top:520.1px;font-size:4.9px;color:#32363a;font-weight:400;">Pl...</div>
<div class="t" style="left:640.75px;width:200px;text-align:center;top:520.1px;font-size:4.9px;color:#32363a;font-weight:400;">Ac...</div>
<div class="t" style="left:658.29px;width:200px;text-align:center;top:520.1px;font-size:4.9px;color:#32363a;font-weight:400;">Pe...</div>
<div class="t" style="left:693.37px;width:200px;text-align:center;top:507.1px;font-size:4.8px;color:#4a4f54;font-weight:400;">WEEK 50</div>
<div class="t" style="left:675.83px;width:200px;text-align:center;top:520.1px;font-size:4.9px;color:#32363a;font-weight:400;">Pl...</div>
<div class="t" style="left:693.37px;width:200px;text-align:center;top:520.1px;font-size:4.9px;color:#32363a;font-weight:400;">Ac...</div>
<div class="t" style="left:710.91px;width:200px;text-align:center;top:520.1px;font-size:4.9px;color:#32363a;font-weight:400;">Pe...</div>
</div>
</body>
</html>
